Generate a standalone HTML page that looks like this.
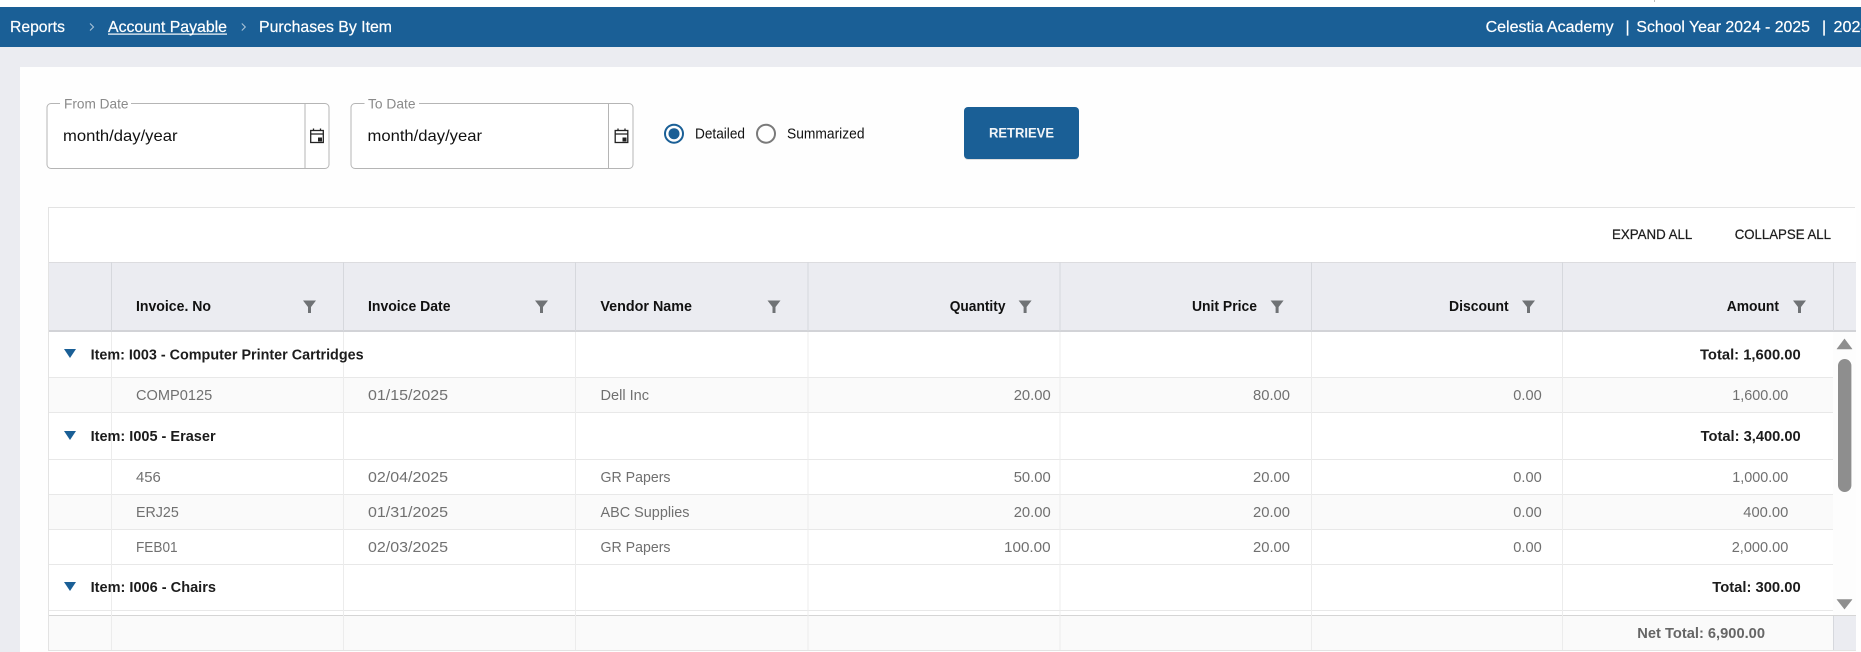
<!DOCTYPE html>
<html lang="en">
<head>
<meta charset="utf-8">
<title>Purchases By Item</title>
<style>
html,body{margin:0;padding:0;width:1861px;height:652px;overflow:hidden;background:#fff}
svg{display:block;font-family:"Liberation Sans",Arial,sans-serif}
.w{fill:#fff;font-size:16px;stroke:#fff;stroke-width:.2px}
.hd{fill:#111;font-size:15px;font-weight:bold;transform:translateY(-.7px)}
.g{fill:#1c1c1c;font-size:14.5px;font-weight:bold;transform:translateY(-.7px)}
.d{fill:#707070;font-size:15px;transform:translateY(-.7px)}
.t{fill:#1c1c1c;font-size:14px;stroke:#1c1c1c;stroke-width:.25px;transform:translateY(-.5px)}
.f{fill:#6f7275}
.vh{fill:#d6d8dd}
.vr{fill:#ececec}
.hr{fill:#e8e8e8}
</style>
</head>
<body>
<svg xmlns="http://www.w3.org/2000/svg" width="1861" height="652" viewBox="0 0 1861 652">
<defs>
<path id="fn" class="f" d="M0 0H13L8 6.5V12.5H5V6.5Z"/>
<g id="cal" fill="none" stroke="#222" stroke-width="1.3">
<rect x="0.7" y="2.5" width="12.6" height="12"/>
<path d="M0.7 6H13.3M3.5 0.5V3M10.5 0.5V3"/>
<rect x="8" y="9.5" width="4" height="4" fill="#222" stroke="none"/>
</g>
<path id="tri" fill="#1a5f96" d="M0 0H12L6 9Z"/>
</defs>

<!-- page -->
<rect width="1861" height="652" fill="#fff"/>
<rect x="1654" y="0" width="1" height="2" fill="#bbb"/>
<rect y="47" width="1861" height="605" fill="#ebecf1"/>
<rect x="20" y="67" width="1841" height="585" fill="#fefefe"/>
<rect y="7" width="1861" height="40" fill="#1a5f96"/>

<!-- top bar -->
<text class="w" x="10" y="32" textLength="55" lengthAdjust="spacingAndGlyphs">Reports</text>
<path d="M90 23.5L93.5 27L90 30.5" fill="none" stroke="#a9c3d8" stroke-width="1.1"/>
<text class="w" x="108" y="32" textLength="119" lengthAdjust="spacingAndGlyphs">Account Payable</text>
<rect x="108" y="33.5" width="119" height="1.2" fill="#fff"/>
<path d="M241.8 23.5L245.3 27L241.8 30.5" fill="none" stroke="#a9c3d8" stroke-width="1.1"/>
<text class="w" x="259" y="32" textLength="133" lengthAdjust="spacingAndGlyphs">Purchases By Item</text>
<text class="w" x="1485.6" y="32" textLength="128" lengthAdjust="spacingAndGlyphs">Celestia Academy</text>
<text class="w" x="1625.5" y="32">|</text>
<text class="w" x="1636.4" y="32" textLength="173.6" lengthAdjust="spacingAndGlyphs">School Year 2024 - 2025</text>
<text class="w" x="1822" y="32">|</text>
<text class="w" x="1833.5" y="32" textLength="36" lengthAdjust="spacingAndGlyphs">2024</text>

<!-- date fields -->
<rect x="47" y="103.5" width="282" height="65" rx="4" fill="#fff" stroke="#b5b5b5"/>
<rect x="304.5" y="104" width="1" height="64" fill="#b5b5b5"/>
<rect x="60" y="100" width="71" height="7" fill="#fff"/>
<text x="64" y="108.5" fill="#8a8a8a" font-size="14" textLength="64.5" lengthAdjust="spacingAndGlyphs">From Date</text>
<text x="63" y="141" fill="#111" font-size="16" textLength="114.5" lengthAdjust="spacingAndGlyphs">month/day/year</text>
<use href="#cal" x="310" y="128"/>

<rect x="351" y="103.5" width="282" height="65" rx="4" fill="#fff" stroke="#b5b5b5"/>
<rect x="608" y="104" width="1" height="64" fill="#b5b5b5"/>
<rect x="364.5" y="100" width="54.5" height="7" fill="#fff"/>
<text x="368" y="108.5" fill="#8a8a8a" font-size="14" textLength="47.5" lengthAdjust="spacingAndGlyphs">To Date</text>
<text x="367.5" y="141" fill="#111" font-size="16" textLength="114.5" lengthAdjust="spacingAndGlyphs">month/day/year</text>
<use href="#cal" x="614.5" y="128"/>

<!-- radios -->
<circle cx="674" cy="133.7" r="9" fill="#fff" stroke="#1a5f96" stroke-width="2"/>
<circle cx="674" cy="133.7" r="5.5" fill="#1a5f96"/>
<text x="695" y="138.3" fill="#111" font-size="14.5" textLength="50" lengthAdjust="spacingAndGlyphs">Detailed</text>
<circle cx="766" cy="133.7" r="9" fill="#fff" stroke="#7a7a7a" stroke-width="2"/>
<text x="787" y="138.3" fill="#111" font-size="14.5" textLength="77.5" lengthAdjust="spacingAndGlyphs">Summarized</text>

<!-- button -->
<rect x="964" y="108" width="115" height="52" rx="4" fill="#000" opacity=".12"/>
<rect x="964" y="107" width="115" height="52" rx="4" fill="#1a5f96"/>
<text x="989" y="137.3" fill="#f2f5f8" font-size="14" font-weight="bold" textLength="65" lengthAdjust="spacingAndGlyphs">RETRIEVE</text>

<!-- table frame -->
<rect x="49" y="207" width="1806" height="1" fill="#e3e3e3"/>
<rect x="48" y="207" width="1" height="444" fill="#e3e3e3"/>
<rect x="49" y="208" width="1807" height="54" fill="#fff"/>
<text class="t" x="1612" y="239.5" textLength="80.3" lengthAdjust="spacingAndGlyphs">EXPAND ALL</text>
<text class="t" x="1734.7" y="239.5" textLength="96.3" lengthAdjust="spacingAndGlyphs">COLLAPSE ALL</text>

<!-- header -->
<rect x="49" y="262" width="1807" height="69" fill="#ebecf1"/>
<rect x="49" y="262" width="1807" height="1" fill="#dcdcdf"/>
<rect x="49" y="330" width="1807" height="2" fill="#d2d3d7"/>
<rect class="vh" x="111" y="262" width="1" height="69"/>
<rect class="vh" x="343" y="262" width="1" height="69"/>
<rect class="vh" x="575" y="262" width="1" height="69"/>
<rect class="vh" x="807.5" y="262" width="1" height="69"/>
<rect class="vh" x="1059.5" y="262" width="1" height="69"/>
<rect class="vh" x="1311" y="262" width="1" height="69"/>
<rect class="vh" x="1562" y="262" width="1" height="69"/>
<rect class="vh" x="1833" y="262" width="1" height="69"/>

<text class="hd" x="136" y="311.5" textLength="75" lengthAdjust="spacingAndGlyphs">Invoice. No</text>
<use href="#fn" x="303" y="300.5"/>
<text class="hd" x="368" y="311.5" textLength="82.5" lengthAdjust="spacingAndGlyphs">Invoice Date</text>
<use href="#fn" x="535" y="300.5"/>
<text class="hd" x="600.4" y="311.5" textLength="91.6" lengthAdjust="spacingAndGlyphs">Vendor Name</text>
<use href="#fn" x="767.5" y="300.5"/>
<text class="hd" x="949.7" y="311.5" textLength="55.8" lengthAdjust="spacingAndGlyphs">Quantity</text>
<use href="#fn" x="1018.6" y="300.5"/>
<text class="hd" x="1192" y="311.5" textLength="65" lengthAdjust="spacingAndGlyphs">Unit Price</text>
<use href="#fn" x="1270.6" y="300.5"/>
<text class="hd" x="1449" y="311.5" textLength="59.7" lengthAdjust="spacingAndGlyphs">Discount</text>
<use href="#fn" x="1522" y="300.5"/>
<text class="hd" x="1726.7" y="311.5" textLength="52.3" lengthAdjust="spacingAndGlyphs">Amount</text>
<use href="#fn" x="1793" y="300.5"/>

<!-- body backgrounds -->
<rect x="49" y="332" width="1784" height="283" fill="#fff"/>
<rect x="49" y="377" width="1784" height="35" fill="#fafafa"/>
<rect x="49" y="494" width="1784" height="35" fill="#fafafa"/>
<rect x="1833" y="332" width="23" height="283" fill="#fdfdfd"/>

<!-- footer -->
<rect x="49" y="616" width="1784" height="34" fill="#fafafa"/>
<rect x="1833" y="616" width="23" height="34" fill="#ebecf1"/>
<rect x="1833" y="616" width="1" height="34" fill="#d6d8dd"/>

<!-- row lines -->
<rect class="hr" x="49" y="377" width="1784" height="1"/>
<rect class="hr" x="49" y="412" width="1784" height="1"/>
<rect class="hr" x="49" y="459" width="1784" height="1"/>
<rect class="hr" x="49" y="494" width="1784" height="1"/>
<rect class="hr" x="49" y="529" width="1784" height="1"/>
<rect class="hr" x="49" y="564" width="1784" height="1"/>
<rect class="hr" x="49" y="610" width="1784" height="1"/>
<rect x="49" y="615" width="1807" height="1" fill="#d5d5d5"/>
<rect x="49" y="650" width="1807" height="1" fill="#e3e3e3"/>

<!-- column lines -->
<rect class="vr" x="111" y="332" width="1" height="318"/>
<rect class="vr" x="343" y="332" width="1" height="318"/>
<rect class="vr" x="575" y="332" width="1" height="318"/>
<rect class="vr" x="807.5" y="332" width="1" height="318"/>
<rect class="vr" x="1059.5" y="332" width="1" height="318"/>
<rect class="vr" x="1311" y="332" width="1" height="318"/>
<rect class="vr" x="1562" y="332" width="1" height="318"/>

<!-- group 1 -->
<use href="#tri" x="64" y="349"/>
<text class="g" x="90.6" y="360" textLength="273" lengthAdjust="spacingAndGlyphs">Item: I003 - Computer Printer Cartridges</text>
<text class="g" x="1700" y="360" textLength="100.7" lengthAdjust="spacingAndGlyphs">Total: 1,600.00</text>
<text class="d" x="136" y="400.5" textLength="76.2" lengthAdjust="spacingAndGlyphs">COMP0125</text>
<text class="d" x="368" y="400.5" textLength="80" lengthAdjust="spacingAndGlyphs">01/15/2025</text>
<text class="d" x="600.5" y="400.5" textLength="48.5" lengthAdjust="spacingAndGlyphs">Dell Inc</text>
<text class="d" x="1013.7" y="400.5" textLength="37" lengthAdjust="spacingAndGlyphs">20.00</text>
<text class="d" x="1253" y="400.5" textLength="37" lengthAdjust="spacingAndGlyphs">80.00</text>
<text class="d" x="1513.3" y="400.5" textLength="28.4" lengthAdjust="spacingAndGlyphs">0.00</text>
<text class="d" x="1732.3" y="400.5" textLength="56" lengthAdjust="spacingAndGlyphs">1,600.00</text>

<!-- group 2 -->
<use href="#tri" x="64" y="431"/>
<text class="g" x="90.6" y="441.5" textLength="125" lengthAdjust="spacingAndGlyphs">Item: I005 - Eraser</text>
<text class="g" x="1700.7" y="441.5" textLength="100" lengthAdjust="spacingAndGlyphs">Total: 3,400.00</text>

<text class="d" x="136" y="482.5" textLength="24.8" lengthAdjust="spacingAndGlyphs">456</text>
<text class="d" x="368" y="482.5" textLength="80" lengthAdjust="spacingAndGlyphs">02/04/2025</text>
<text class="d" x="600.5" y="482.5" textLength="70" lengthAdjust="spacingAndGlyphs">GR Papers</text>
<text class="d" x="1013.7" y="482.5" textLength="37" lengthAdjust="spacingAndGlyphs">50.00</text>
<text class="d" x="1253" y="482.5" textLength="37" lengthAdjust="spacingAndGlyphs">20.00</text>
<text class="d" x="1513.3" y="482.5" textLength="28.4" lengthAdjust="spacingAndGlyphs">0.00</text>
<text class="d" x="1732.3" y="482.5" textLength="56" lengthAdjust="spacingAndGlyphs">1,000.00</text>

<text class="d" x="136" y="517.5" textLength="42.8" lengthAdjust="spacingAndGlyphs">ERJ25</text>
<text class="d" x="368" y="517.5" textLength="80" lengthAdjust="spacingAndGlyphs">01/31/2025</text>
<text class="d" x="600.5" y="517.5" textLength="89" lengthAdjust="spacingAndGlyphs">ABC Supplies</text>
<text class="d" x="1013.7" y="517.5" textLength="37" lengthAdjust="spacingAndGlyphs">20.00</text>
<text class="d" x="1253" y="517.5" textLength="37" lengthAdjust="spacingAndGlyphs">20.00</text>
<text class="d" x="1513.3" y="517.5" textLength="28.4" lengthAdjust="spacingAndGlyphs">0.00</text>
<text class="d" x="1743.3" y="517.5" textLength="45" lengthAdjust="spacingAndGlyphs">400.00</text>

<text class="d" x="136" y="552.5" textLength="41.6" lengthAdjust="spacingAndGlyphs">FEB01</text>
<text class="d" x="368" y="552.5" textLength="80" lengthAdjust="spacingAndGlyphs">02/03/2025</text>
<text class="d" x="600.5" y="552.5" textLength="70" lengthAdjust="spacingAndGlyphs">GR Papers</text>
<text class="d" x="1004" y="552.5" textLength="46.6" lengthAdjust="spacingAndGlyphs">100.00</text>
<text class="d" x="1253" y="552.5" textLength="37" lengthAdjust="spacingAndGlyphs">20.00</text>
<text class="d" x="1513.3" y="552.5" textLength="28.4" lengthAdjust="spacingAndGlyphs">0.00</text>
<text class="d" x="1731.7" y="552.5" textLength="56.6" lengthAdjust="spacingAndGlyphs">2,000.00</text>

<!-- group 3 -->
<use href="#tri" x="64" y="582"/>
<text class="g" x="90.6" y="592.5" textLength="125.4" lengthAdjust="spacingAndGlyphs">Item: I006 - Chairs</text>
<text class="g" x="1712.3" y="592.5" textLength="88.4" lengthAdjust="spacingAndGlyphs">Total: 300.00</text>

<!-- footer total -->
<text x="1637.3" y="638" fill="#666" font-size="14.5" font-weight="bold" textLength="127.7" lengthAdjust="spacingAndGlyphs">Net Total: 6,900.00</text>

<!-- scrollbar -->
<path d="M1844.5 339L1852 349H1837Z" fill="#8e8e8e" stroke="#8e8e8e" stroke-width=".6" stroke-linejoin="round"/>
<rect x="1838" y="359" width="13.4" height="133" rx="6.7" fill="#8e8e8e"/>
<path d="M1837 599.5H1852L1844.5 609Z" fill="#8e8e8e" stroke="#8e8e8e" stroke-width=".6" stroke-linejoin="round"/>
</svg>
</body>
</html>
